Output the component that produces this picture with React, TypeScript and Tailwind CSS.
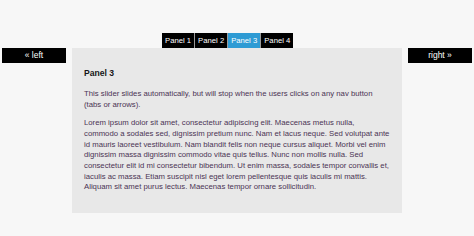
import React from "react";

const tabs = ["Panel 1", "Panel 2", "Panel 3", "Panel 4"];

export default function App() {
  return (
    <div
      className="w-[474px] h-[236px] bg-[#f7f7f7] overflow-hidden"
      style={{ fontFamily: '"Liberation Sans", Arial, sans-serif' }}
    >
      <div className="pt-[33px] pl-[162px] flex">
        {tabs.map((t, i) => (
          <div
            key={t}
            className={`h-[15px] px-[3px] flex items-center text-[7.7px] text-white border-r border-[#9a9a9a] last:border-r-0 ${
              i === 2 ? "bg-[#2e9bd4]" : "bg-black"
            }`}
          >
            {t}
          </div>
        ))}
      </div>
      <div className="flex items-start pl-[2px] gap-[6px]">
        <div className="w-[64px] h-[15px] bg-black text-white text-[8.5px] flex items-center justify-center">
          « left
        </div>
        <div className="w-[330px] h-[165px] bg-[#e8e8e8] pl-[12px] pr-[6px] pt-[20px]">
          <div className="text-[8.6px] font-bold text-[#161616] leading-[10px]">Panel 3</div>
          <p className="mt-[11px] text-[7.75px] leading-[10.6px] text-[#4b3454] whitespace-nowrap">
            This slider slides automatically, but will stop when the users clicks on any nav button
            <br />
            (tabs or arrows).
          </p>
          <p className="mt-[8px] text-[7.75px] leading-[10.7px] text-[#4b3454] whitespace-nowrap">
            Lorem ipsum dolor sit amet, consectetur adipiscing elit. Maecenas metus nulla,
            <br />
            commodo a sodales sed, dignissim pretium nunc. Nam et lacus neque. Sed volutpat ante
            <br />
            id mauris laoreet vestibulum. Nam blandit felis non neque cursus aliquet. Morbi vel enim
            <br />
            dignissim massa dignissim commodo vitae quis tellus. Nunc non mollis nulla. Sed
            <br />
            consectetur elit id mi consectetur bibendum. Ut enim massa, sodales tempor convallis et,
            <br />
            iaculis ac massa. Etiam suscipit nisl eget lorem pellentesque quis iaculis mi mattis.
            <br />
            Aliquam sit amet purus lectus. Maecenas tempor ornare sollicitudin.
          </p>
        </div>
        <div className="w-[64px] h-[15px] bg-black text-white text-[8.5px] flex items-center justify-center">
          right »
        </div>
      </div>
    </div>
  );
}
